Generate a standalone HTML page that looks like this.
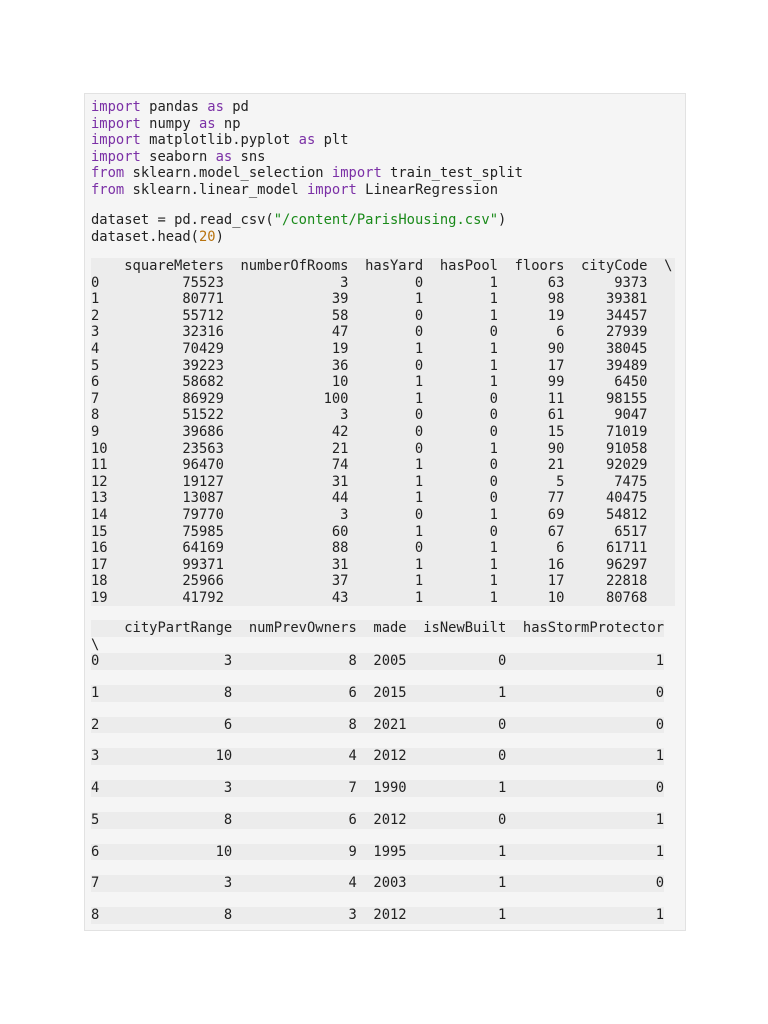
<!DOCTYPE html>
<html><head><meta charset="utf-8"><style>
body{margin:0;background:#fff;width:768px;height:1024px;position:relative;overflow:hidden}
.box{position:absolute;left:84px;top:93px;width:600px;height:836px;background:#f5f5f5;border:1px solid #e2e2e2}
.m{font-family:"DejaVu Sans Mono","Liberation Mono",monospace;font-size:13.8px;color:#222;position:absolute;left:91px}
.l{height:16.6px;line-height:16.6px;white-space:pre}
.k{color:#7b30a6}.s{color:#1a8a1a}.n{color:#b8730f}
.t1{background:#ececec;width:584px}
.r span{display:inline-block;text-align:right}
.r span.i{text-align:left}
.r2{height:31.75px}
.r2 .g{background:#ececec;width:573px;height:16.6px;line-height:16.6px;white-space:pre}
</style></head><body>
<div class="box"></div>
<div class="m" style="top:99px">
<div class="l"><span class="k">import</span> pandas <span class="k">as</span> pd</div>
<div class="l"><span class="k">import</span> numpy <span class="k">as</span> np</div>
<div class="l"><span class="k">import</span> matplotlib.pyplot <span class="k">as</span> plt</div>
<div class="l"><span class="k">import</span> seaborn <span class="k">as</span> sns</div>
<div class="l"><span class="k">from</span> sklearn.model_selection <span class="k">import</span> train_test_split</div>
<div class="l"><span class="k">from</span> sklearn.linear_model <span class="k">import</span> LinearRegression</div>
</div>
<div class="m" style="top:212px">
<div class="l">dataset = pd.read_csv(<span class="s">"/content/ParisHousing.csv"</span>)</div>
<div class="l">dataset.head(<span class="n">20</span>)</div>
</div>
<div class="m t1" style="top:258px">
<div class="l r"><span class="i" style="width:2ch"></span><span style="width:14ch">squareMeters</span><span style="width:15ch">numberOfRooms</span><span style="width:9ch">hasYard</span><span style="width:9ch">hasPool</span><span style="width:8ch">floors</span><span style="width:10ch">cityCode</span><span style="width:3ch">\</span></div>
<div class="l r"><span class="i" style="width:2ch">0</span><span style="width:14ch">75523</span><span style="width:15ch">3</span><span style="width:9ch">0</span><span style="width:9ch">1</span><span style="width:8ch">63</span><span style="width:10ch">9373</span></div>
<div class="l r"><span class="i" style="width:2ch">1</span><span style="width:14ch">80771</span><span style="width:15ch">39</span><span style="width:9ch">1</span><span style="width:9ch">1</span><span style="width:8ch">98</span><span style="width:10ch">39381</span></div>
<div class="l r"><span class="i" style="width:2ch">2</span><span style="width:14ch">55712</span><span style="width:15ch">58</span><span style="width:9ch">0</span><span style="width:9ch">1</span><span style="width:8ch">19</span><span style="width:10ch">34457</span></div>
<div class="l r"><span class="i" style="width:2ch">3</span><span style="width:14ch">32316</span><span style="width:15ch">47</span><span style="width:9ch">0</span><span style="width:9ch">0</span><span style="width:8ch">6</span><span style="width:10ch">27939</span></div>
<div class="l r"><span class="i" style="width:2ch">4</span><span style="width:14ch">70429</span><span style="width:15ch">19</span><span style="width:9ch">1</span><span style="width:9ch">1</span><span style="width:8ch">90</span><span style="width:10ch">38045</span></div>
<div class="l r"><span class="i" style="width:2ch">5</span><span style="width:14ch">39223</span><span style="width:15ch">36</span><span style="width:9ch">0</span><span style="width:9ch">1</span><span style="width:8ch">17</span><span style="width:10ch">39489</span></div>
<div class="l r"><span class="i" style="width:2ch">6</span><span style="width:14ch">58682</span><span style="width:15ch">10</span><span style="width:9ch">1</span><span style="width:9ch">1</span><span style="width:8ch">99</span><span style="width:10ch">6450</span></div>
<div class="l r"><span class="i" style="width:2ch">7</span><span style="width:14ch">86929</span><span style="width:15ch">100</span><span style="width:9ch">1</span><span style="width:9ch">0</span><span style="width:8ch">11</span><span style="width:10ch">98155</span></div>
<div class="l r"><span class="i" style="width:2ch">8</span><span style="width:14ch">51522</span><span style="width:15ch">3</span><span style="width:9ch">0</span><span style="width:9ch">0</span><span style="width:8ch">61</span><span style="width:10ch">9047</span></div>
<div class="l r"><span class="i" style="width:2ch">9</span><span style="width:14ch">39686</span><span style="width:15ch">42</span><span style="width:9ch">0</span><span style="width:9ch">0</span><span style="width:8ch">15</span><span style="width:10ch">71019</span></div>
<div class="l r"><span class="i" style="width:2ch">10</span><span style="width:14ch">23563</span><span style="width:15ch">21</span><span style="width:9ch">0</span><span style="width:9ch">1</span><span style="width:8ch">90</span><span style="width:10ch">91058</span></div>
<div class="l r"><span class="i" style="width:2ch">11</span><span style="width:14ch">96470</span><span style="width:15ch">74</span><span style="width:9ch">1</span><span style="width:9ch">0</span><span style="width:8ch">21</span><span style="width:10ch">92029</span></div>
<div class="l r"><span class="i" style="width:2ch">12</span><span style="width:14ch">19127</span><span style="width:15ch">31</span><span style="width:9ch">1</span><span style="width:9ch">0</span><span style="width:8ch">5</span><span style="width:10ch">7475</span></div>
<div class="l r"><span class="i" style="width:2ch">13</span><span style="width:14ch">13087</span><span style="width:15ch">44</span><span style="width:9ch">1</span><span style="width:9ch">0</span><span style="width:8ch">77</span><span style="width:10ch">40475</span></div>
<div class="l r"><span class="i" style="width:2ch">14</span><span style="width:14ch">79770</span><span style="width:15ch">3</span><span style="width:9ch">0</span><span style="width:9ch">1</span><span style="width:8ch">69</span><span style="width:10ch">54812</span></div>
<div class="l r"><span class="i" style="width:2ch">15</span><span style="width:14ch">75985</span><span style="width:15ch">60</span><span style="width:9ch">1</span><span style="width:9ch">0</span><span style="width:8ch">67</span><span style="width:10ch">6517</span></div>
<div class="l r"><span class="i" style="width:2ch">16</span><span style="width:14ch">64169</span><span style="width:15ch">88</span><span style="width:9ch">0</span><span style="width:9ch">1</span><span style="width:8ch">6</span><span style="width:10ch">61711</span></div>
<div class="l r"><span class="i" style="width:2ch">17</span><span style="width:14ch">99371</span><span style="width:15ch">31</span><span style="width:9ch">1</span><span style="width:9ch">1</span><span style="width:8ch">16</span><span style="width:10ch">96297</span></div>
<div class="l r"><span class="i" style="width:2ch">18</span><span style="width:14ch">25966</span><span style="width:15ch">37</span><span style="width:9ch">1</span><span style="width:9ch">1</span><span style="width:8ch">17</span><span style="width:10ch">22818</span></div>
<div class="l r"><span class="i" style="width:2ch">19</span><span style="width:14ch">41792</span><span style="width:15ch">43</span><span style="width:9ch">1</span><span style="width:9ch">1</span><span style="width:8ch">10</span><span style="width:10ch">80768</span></div>
</div>
<div class="m" style="top:620px">
<div class="l r" style="background:#ececec;width:573px"><span class="i" style="width:2ch"></span><span style="width:15ch">cityPartRange</span><span style="width:15ch">numPrevOwners</span><span style="width:6ch">made</span><span style="width:12ch">isNewBuilt</span><span style="width:19ch">hasStormProtector</span></div>
<div class="l">\</div>
<div class="r2"><div class="g r"><span class="i" style="width:2ch">0</span><span style="width:15ch">3</span><span style="width:15ch">8</span><span style="width:6ch">2005</span><span style="width:12ch">0</span><span style="width:19ch">1</span></div></div>
<div class="r2"><div class="g r"><span class="i" style="width:2ch">1</span><span style="width:15ch">8</span><span style="width:15ch">6</span><span style="width:6ch">2015</span><span style="width:12ch">1</span><span style="width:19ch">0</span></div></div>
<div class="r2"><div class="g r"><span class="i" style="width:2ch">2</span><span style="width:15ch">6</span><span style="width:15ch">8</span><span style="width:6ch">2021</span><span style="width:12ch">0</span><span style="width:19ch">0</span></div></div>
<div class="r2"><div class="g r"><span class="i" style="width:2ch">3</span><span style="width:15ch">10</span><span style="width:15ch">4</span><span style="width:6ch">2012</span><span style="width:12ch">0</span><span style="width:19ch">1</span></div></div>
<div class="r2"><div class="g r"><span class="i" style="width:2ch">4</span><span style="width:15ch">3</span><span style="width:15ch">7</span><span style="width:6ch">1990</span><span style="width:12ch">1</span><span style="width:19ch">0</span></div></div>
<div class="r2"><div class="g r"><span class="i" style="width:2ch">5</span><span style="width:15ch">8</span><span style="width:15ch">6</span><span style="width:6ch">2012</span><span style="width:12ch">0</span><span style="width:19ch">1</span></div></div>
<div class="r2"><div class="g r"><span class="i" style="width:2ch">6</span><span style="width:15ch">10</span><span style="width:15ch">9</span><span style="width:6ch">1995</span><span style="width:12ch">1</span><span style="width:19ch">1</span></div></div>
<div class="r2"><div class="g r"><span class="i" style="width:2ch">7</span><span style="width:15ch">3</span><span style="width:15ch">4</span><span style="width:6ch">2003</span><span style="width:12ch">1</span><span style="width:19ch">0</span></div></div>
<div class="r2"><div class="g r"><span class="i" style="width:2ch">8</span><span style="width:15ch">8</span><span style="width:15ch">3</span><span style="width:6ch">2012</span><span style="width:12ch">1</span><span style="width:19ch">1</span></div></div>
</div>
</body></html>
